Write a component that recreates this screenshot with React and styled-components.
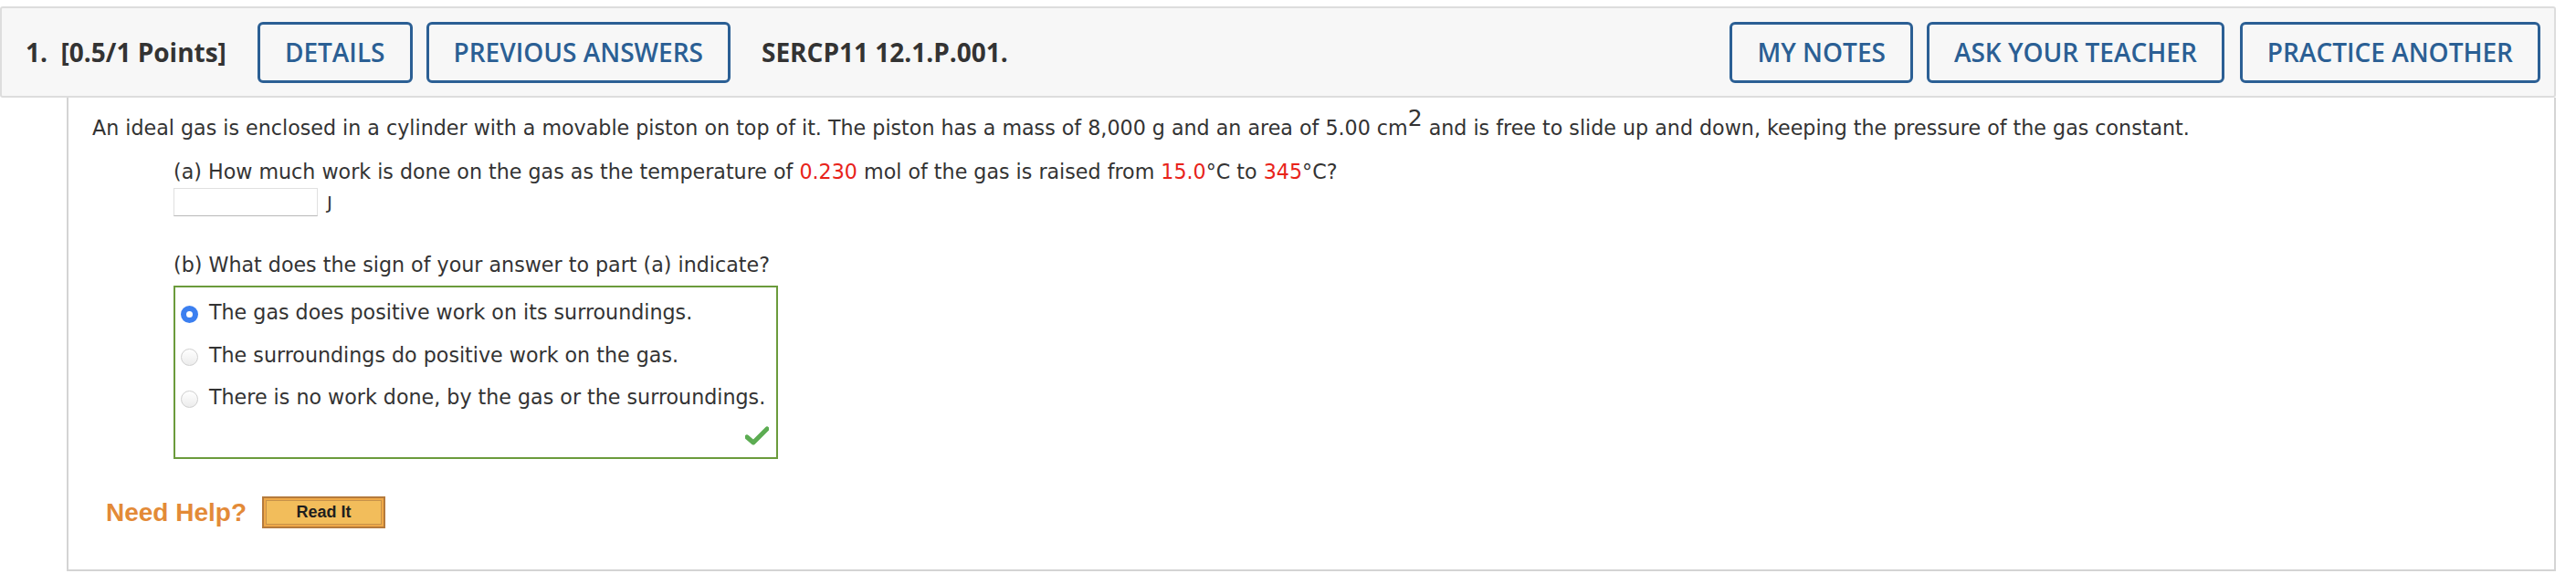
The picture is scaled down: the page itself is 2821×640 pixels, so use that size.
import React from "react";
import styled, { createGlobalStyle } from "styled-components";

const GlobalStyle = createGlobalStyle`
  body {
    margin: 0;
    background: #ffffff;
    font-family: "DejaVu Sans", Verdana, sans-serif;
    color: #333333;
  }
`;

const Page = styled.div`
  width: 2799px;
  padding-top: 7px;
`;

const Header = styled.div`
  display: flex;
  align-items: center;
  height: 96px;
  padding: 0 15px 0 26px;
  background: #f7f7f7;
  border: 2px solid #dddddd;
  border-radius: 3px;
  font-family: "Open Sans", sans-serif;
`;

const QuestionLabel = styled.div`
  font-size: 28px;
  font-weight: 700;
  color: #333333;
  margin-right: ${(p) => p.gap || 0}px;
  white-space: nowrap;
`;

const HeaderButton = styled.button`
  height: 67px;
  padding: 0 27px;
  margin-right: ${(p) => p.gap || 0}px;
  background: transparent;
  border: 3px solid #2b5f94;
  border-radius: 6px;
  font-family: "Open Sans", sans-serif;
  font-size: 28px;
  font-weight: 600;
  color: #2b5f94;
  white-space: nowrap;
`;

const Spacer = styled.div`
  flex: 1;
`;

const Content = styled.div`
  margin-left: 73px;
  height: 519px;
  padding: 18px 0 0 26px;
  border: 2px solid #d4d4d4;
  border-top: none;
  box-sizing: border-box;
  font-size: 22.2px;
`;

const Line = styled.div`
  line-height: 30px;
  margin-left: ${(p) => p.indent || 0}px;
  margin-top: ${(p) => p.top || 0}px;
  white-space: nowrap;
`;

const Sup = styled.sup`
  font-size: 25px;
  line-height: 0;
  position: relative;
  top: -2px;
`;

const Red = styled.span`
  color: #e8231a;
`;

const AnswerRow = styled.div`
  display: flex;
  align-items: center;
  gap: 10px;
  margin: 3px 0 0 89px;
`;

const TextBox = styled.div`
  width: 156px;
  height: 29px;
  border: 1px solid #e0e0e0;
  border-bottom-color: #b8b8b8;
  background: #ffffff;
`;

const Unit = styled.span`
  font-size: 20px;
`;

const ChoiceBox = styled.div`
  position: relative;
  width: 662px;
  height: 190px;
  margin: 8px 0 0 89px;
  padding-top: 4px;
  border: 2px solid #6b9b3c;
  box-sizing: border-box;
`;

const Choice = styled.div`
  display: flex;
  align-items: center;
  height: 46.5px;
  padding-left: 6px;
  gap: 12px;
  white-space: nowrap;
`;

const Radio = styled.span`
  width: 19px;
  height: 19px;
  border-radius: 50%;
  box-sizing: border-box;
  flex: none;
  margin-top: 5px;
  ${(p) =>
    p.checked
      ? `background: #ffffff; border: 6px solid #3b7ff0;`
      : `background: linear-gradient(#ffffff, #ececec); border: 1px solid #cfcfcf;`}
`;

const Check = styled.svg`
  position: absolute;
  right: 8px;
  bottom: 12px;
`;

const HelpRow = styled.div`
  display: flex;
  align-items: center;
  gap: 17px;
  margin: 41px 0 0 15px;
`;

const HelpText = styled.span`
  font-family: "Liberation Sans", Arial, sans-serif;
  font-size: 28px;
  font-weight: 700;
  color: #e38a37;
`;

const ReadIt = styled.button`
  width: 135px;
  height: 35px;
  padding: 2px;
  background: #efa948;
  border: 2px solid #b57a3c;
  box-sizing: border-box;
`;

const ReadItInner = styled.span`
  display: flex;
  align-items: center;
  justify-content: center;
  height: 100%;
  background: #f2bd5b;
  border: 1px solid #c7924a;
  box-sizing: border-box;
  font-family: "Liberation Sans", Arial, sans-serif;
  font-size: 18px;
  font-weight: 700;
  color: #1e1e1e;
`;

export default function App() {
  return (
    <Page>
      <GlobalStyle />
      <Header>
        <QuestionLabel gap={34}>1.&nbsp; [0.5/1 Points]</QuestionLabel>
        <HeaderButton gap={15}>DETAILS</HeaderButton>
        <HeaderButton gap={34}>PREVIOUS ANSWERS</HeaderButton>
        <QuestionLabel>SERCP11 12.1.P.001.</QuestionLabel>
        <Spacer />
        <HeaderButton gap={15}>MY NOTES</HeaderButton>
        <HeaderButton gap={17}>ASK YOUR TEACHER</HeaderButton>
        <HeaderButton>PRACTICE ANOTHER</HeaderButton>
      </Header>
      <Content>
        <Line>
          An ideal gas is enclosed in a cylinder with a movable piston on top of it. The piston has a
          mass of 8,000 g and an area of 5.00 cm<Sup>2</Sup> and is free to slide up and down, keeping
          the pressure of the gas constant.
        </Line>
        <Line indent={89} top={18}>
          (a) How much work is done on the gas as the temperature of <Red>0.230</Red> mol of the gas
          is raised from <Red>15.0</Red>°C to <Red>345</Red>°C?
        </Line>
        <AnswerRow>
          <TextBox />
          <Unit>J</Unit>
        </AnswerRow>
        <Line indent={89} top={38}>
          (b) What does the sign of your answer to part (a) indicate?
        </Line>
        <ChoiceBox>
          <Choice>
            <Radio checked />
            The gas does positive work on its surroundings.
          </Choice>
          <Choice>
            <Radio />
            The surroundings do positive work on the gas.
          </Choice>
          <Choice>
            <Radio />
            There is no work done, by the gas or the surroundings.
          </Choice>
          <Check width="26" height="22" viewBox="0 0 26 22">
            <path
              d="M2 12 L9 18 L24 3"
              fill="none"
              stroke="#5cac52"
              strokeWidth="5"
              strokeLinecap="round"
              strokeLinejoin="round"
            />
          </Check>
        </ChoiceBox>
        <HelpRow>
          <HelpText>Need Help?</HelpText>
          <ReadIt>
            <ReadItInner>Read It</ReadItInner>
          </ReadIt>
        </HelpRow>
      </Content>
    </Page>
  );
}
